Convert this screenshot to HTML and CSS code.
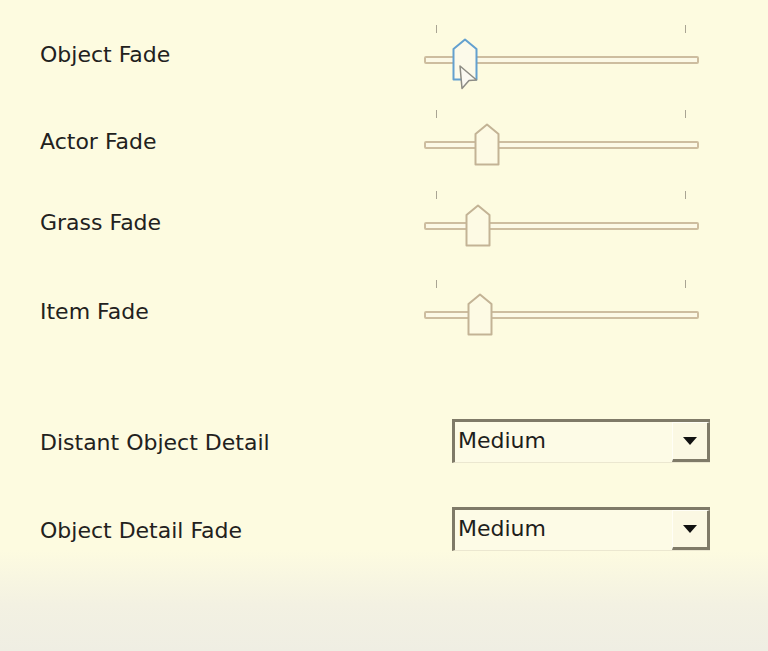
FILE: index.html
```html
<!DOCTYPE html>
<html lang="en">
<head>
    <meta charset="UTF-8"/>
    <title>Fade Settings</title>
    <link rel="stylesheet" href="styles.css">
</head>
<body>
<div class="panel">
    <div class="row row-object">
        <span class="label">Object Fade</span>
        <div class="slider hover">
            <div class="ticks"><span class="tick"></span><span class="tick"></span></div>
            <div class="track"></div>
            <svg class="thumb" style="left: 28px;" width="26" height="43" viewBox="0 0 26 43">
                <path d="M1.5 41.5 V11 L13 1.5 L24.5 11 V41.5 Z"/>
            </svg>
            <svg class="cursor" width="20" height="26" viewBox="0 0 20 26">
                <path d="M1 1 L17.5 15 L10 15.5 L3 23.5 Z"/>
            </svg>
        </div>
    </div>
    <div class="row row-actor">
        <span class="label">Actor Fade</span>
        <div class="slider">
            <div class="ticks"><span class="tick"></span><span class="tick"></span></div>
            <div class="track"></div>
            <svg class="thumb" style="left: 50px;" width="26" height="43" viewBox="0 0 26 43">
                <path d="M1.5 41.5 V11 L13 1.5 L24.5 11 V41.5 Z"/>
            </svg>
        </div>
    </div>
    <div class="row row-grass">
        <span class="label">Grass Fade</span>
        <div class="slider">
            <div class="ticks"><span class="tick"></span><span class="tick"></span></div>
            <div class="track"></div>
            <svg class="thumb" style="left: 41px;" width="26" height="43" viewBox="0 0 26 43">
                <path d="M1.5 41.5 V11 L13 1.5 L24.5 11 V41.5 Z"/>
            </svg>
        </div>
    </div>
    <div class="row row-item">
        <span class="label">Item Fade</span>
        <div class="slider">
            <div class="ticks"><span class="tick"></span><span class="tick"></span></div>
            <div class="track"></div>
            <svg class="thumb" style="left: 43px;" width="26" height="43" viewBox="0 0 26 43">
                <path d="M1.5 41.5 V11 L13 1.5 L24.5 11 V41.5 Z"/>
            </svg>
        </div>
    </div>

    <div class="row combo-row">
        <span class="label">Distant Object Detail</span>
        <div class="combo">
            <span class="combo-value">Medium</span>
            <span class="combo-btn">
                <svg width="14" height="8" viewBox="0 0 14 8"><path d="M0 0 H14 L7 8 Z"/></svg>
            </span>
        </div>
    </div>
    <div class="row combo-row">
        <span class="label">Object Detail Fade</span>
        <div class="combo">
            <span class="combo-value">Medium</span>
            <span class="combo-btn">
                <svg width="14" height="8" viewBox="0 0 14 8"><path d="M0 0 H14 L7 8 Z"/></svg>
            </span>
        </div>
    </div>
</div>
</body>
</html>
```

FILE: styles.css
```css
html, body {
    height: 100%;
}

body {
    margin: 0;
    background: linear-gradient(to bottom, #fdfbe0 0, #fdfbe0 550px, #f3f1e2 605px, #efeee3 651px);
    font-family: "DejaVu Sans", sans-serif;
    font-size: 22px;
    color: #22211d;
    overflow: hidden;
}

.panel {
    padding: 25px 0 0 40px;
}

.row {
    display: flex;
    align-items: flex-start;
}

.row-object {
    height: 85px;
}

.row-actor {
    height: 81px;
}

.row-grass {
    height: 89px;
}

.row-item {
    height: 117px;
}

.label {
    width: 384px;
    line-height: 64px;
    white-space: nowrap;
}

.row-object .label {
    line-height: 60px;
}

/* slider */

.slider {
    position: relative;
    width: 275px;
    height: 64px;
}

.ticks {
    display: flex;
    justify-content: space-between;
    padding: 0 13px 0 12px;
    height: 8px;
}

.tick {
    width: 1px;
    height: 8px;
    background: #a9a493;
}

.track {
    margin-top: 23px;
    height: 4px;
    border: 2px solid #cdbd9f;
    border-radius: 2px;
    background: #fcf9e6;
}

.thumb {
    position: absolute;
    top: 13px;
}

.thumb path {
    fill: #fdfae4;
    stroke: #c3b395;
    stroke-width: 2;
    stroke-linejoin: round;
}

.slider.hover .thumb path {
    stroke: #63a0cf;
    fill: #fcfaea;
}

.cursor {
    position: absolute;
    left: 35px;
    top: 40px;
}

.cursor path {
    fill: #fbfaf2;
    stroke: #8d8c84;
    stroke-width: 1.5;
    stroke-linejoin: round;
}

/* combo box */

.combo-row {
    height: 66px;
    padding-top: 22px;
}

.combo-row .label {
    line-height: 48px;
}

.combo {
    display: flex;
    width: 258px;
    height: 44px;
    margin-left: 28px;
    box-sizing: border-box;
    border-top: 3px solid #7f7a68;
    border-left: 3px solid #7f7a68;
    border-bottom: 1px solid #ebe7d0;
    background: #fdfbe6;
}

.combo-value {
    flex: 1;
    padding-left: 3px;
    line-height: 38px;
    color: #1e1e1c;
}

.combo-btn {
    width: 34px;
    display: flex;
    align-items: center;
    justify-content: center;
    border-top: 1px solid #fffef6;
    border-left: 1px solid #fffef6;
    border-right: 3px solid #7f7a68;
    border-bottom: 3px solid #7f7a68;
    background: #fbf8e3;
}

.combo-btn svg path {
    fill: #111;
}
```
